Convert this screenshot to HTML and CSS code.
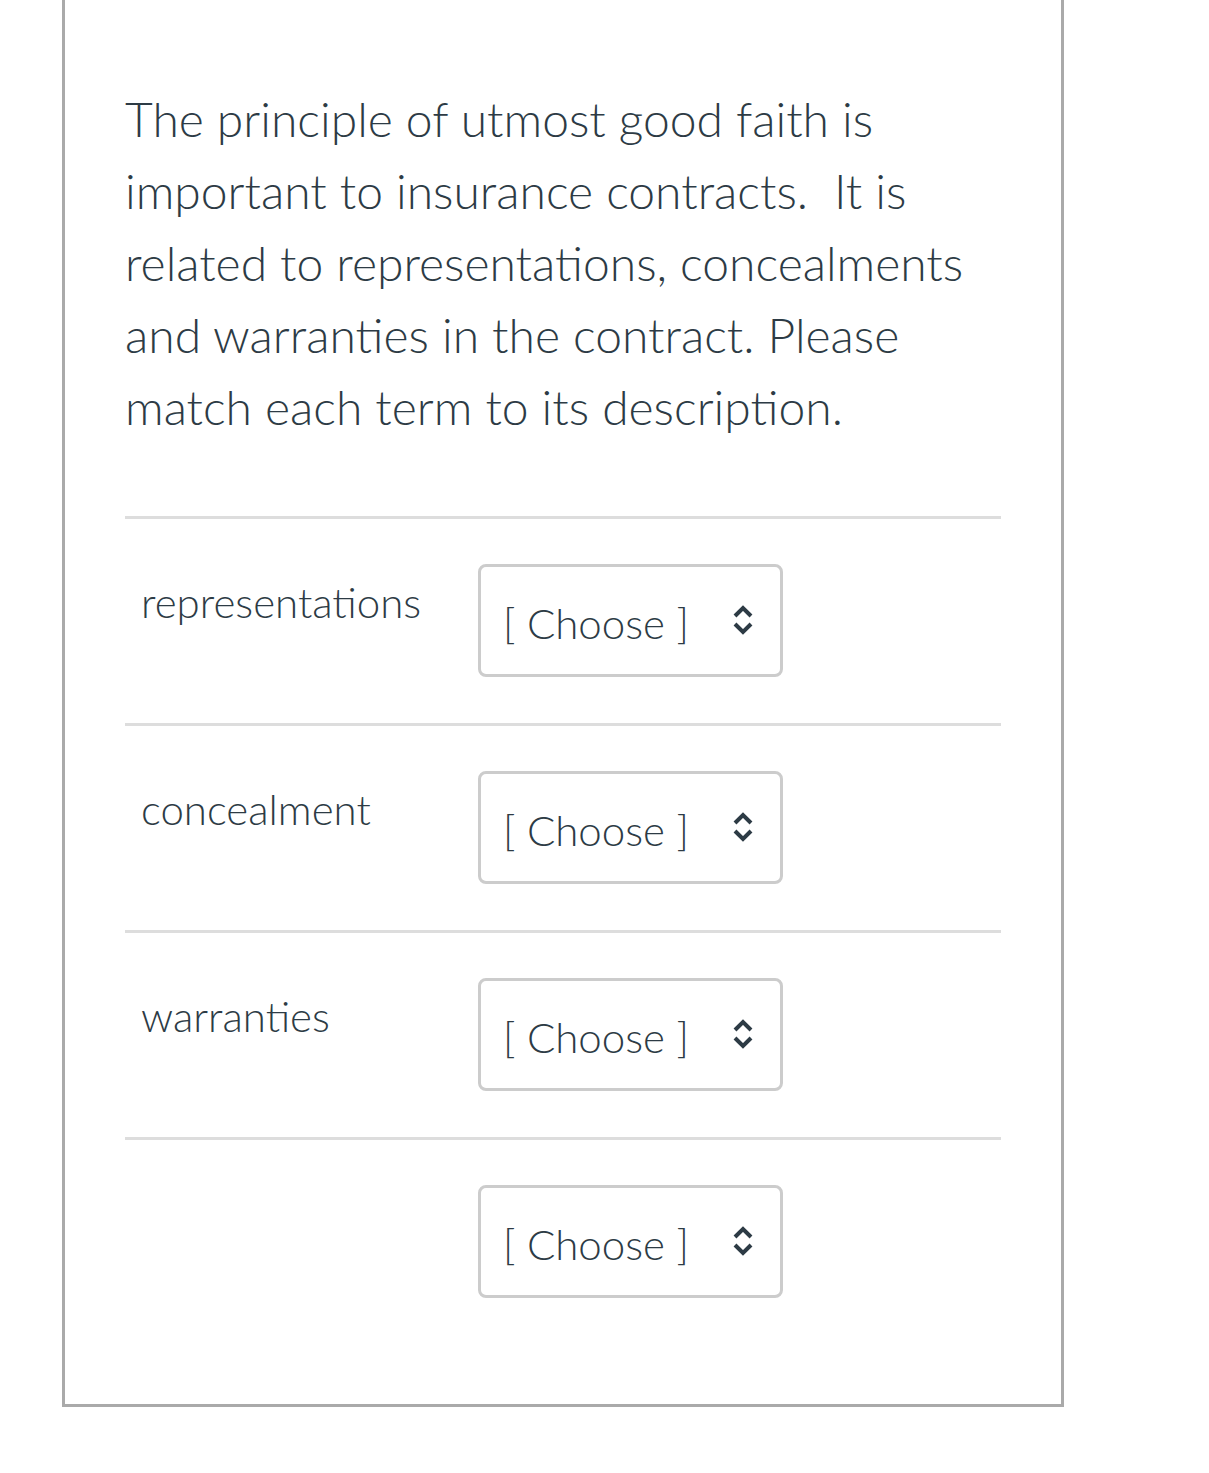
FILE: index.html
```html
<!DOCTYPE html>
<html lang="en">
<head>
<meta charset="utf-8">
<title>Matching question</title>
<link rel="stylesheet" href="styles.css">
</head>
<body>
<div class="question">
  <div class="question-text">
    The principle of utmost good faith is important to insurance contracts.&nbsp; It is related to representations, concealments and warranties in the contract. Please match each term to its description.
  </div>
  <div class="answers">
    <div class="answer">
      <div class="answer-label">representations</div>
      <div class="select"><span class="select-text">[ Choose ]</span><svg class="chev" viewBox="0 0 20 30" width="20" height="30"><path d="M2 11 L10 3 L18 11 M2 19 L10 27 L18 19" fill="none" stroke="#2d3b45" stroke-width="4" stroke-linecap="butt" stroke-linejoin="miter"/></svg></div>
    </div>
    <div class="answer">
      <div class="answer-label">concealment</div>
      <div class="select"><span class="select-text">[ Choose ]</span><svg class="chev" viewBox="0 0 20 30" width="20" height="30"><path d="M2 11 L10 3 L18 11 M2 19 L10 27 L18 19" fill="none" stroke="#2d3b45" stroke-width="4" stroke-linecap="butt" stroke-linejoin="miter"/></svg></div>
    </div>
    <div class="answer">
      <div class="answer-label">warranties</div>
      <div class="select"><span class="select-text">[ Choose ]</span><svg class="chev" viewBox="0 0 20 30" width="20" height="30"><path d="M2 11 L10 3 L18 11 M2 19 L10 27 L18 19" fill="none" stroke="#2d3b45" stroke-width="4" stroke-linecap="butt" stroke-linejoin="miter"/></svg></div>
    </div>
    <div class="answer">
      <div class="answer-label"></div>
      <div class="select"><span class="select-text">[ Choose ]</span><svg class="chev" viewBox="0 0 20 30" width="20" height="30"><path d="M2 11 L10 3 L18 11 M2 19 L10 27 L18 19" fill="none" stroke="#2d3b45" stroke-width="4" stroke-linecap="butt" stroke-linejoin="miter"/></svg></div>
    </div>
  </div>
</div>
</body>
</html>
```

FILE: styles.css
```css
html, body {
  margin: 0;
  padding: 0;
  background: #ffffff;
}

body {
  font-family: Lato, "Noto Sans", sans-serif;
  color: #2d3b45;
}

.question {
  margin-left: 62px;
  width: 1002px;
  box-sizing: border-box;
  border: 3px solid #aaaaaa;
  border-top: none;
  padding: 83px 60px 60px 60px;
}

.question-text {
  font-size: 48px;
  line-height: 72px;
  font-weight: 300;
  width: 860px;
}

.answers {
  margin-top: 73px;
  width: 876px;
}

.answer {
  display: flex;
  align-items: flex-start;
  border-top: 3px solid #dddddd;
  padding: 45px 0 47px 16px;
  height: 112px;
}

.answer-label {
  width: 337px;
  font-size: 42px;
  line-height: 50px;
  font-weight: 300;
  padding-top: 13px;
}

.select {
  width: 305px;
  height: 113px;
  box-sizing: border-box;
  border: 3px solid #cccccc;
  border-radius: 8px;
  display: flex;
  align-items: center;
  justify-content: space-between;
  padding: 4px 27px 0 22px;
}

.select-text {
  font-size: 42px;
  font-weight: 300;
  line-height: 50px;
  white-space: pre;
}

.chev {
  display: block;
  margin-top: -6px;
}
```
